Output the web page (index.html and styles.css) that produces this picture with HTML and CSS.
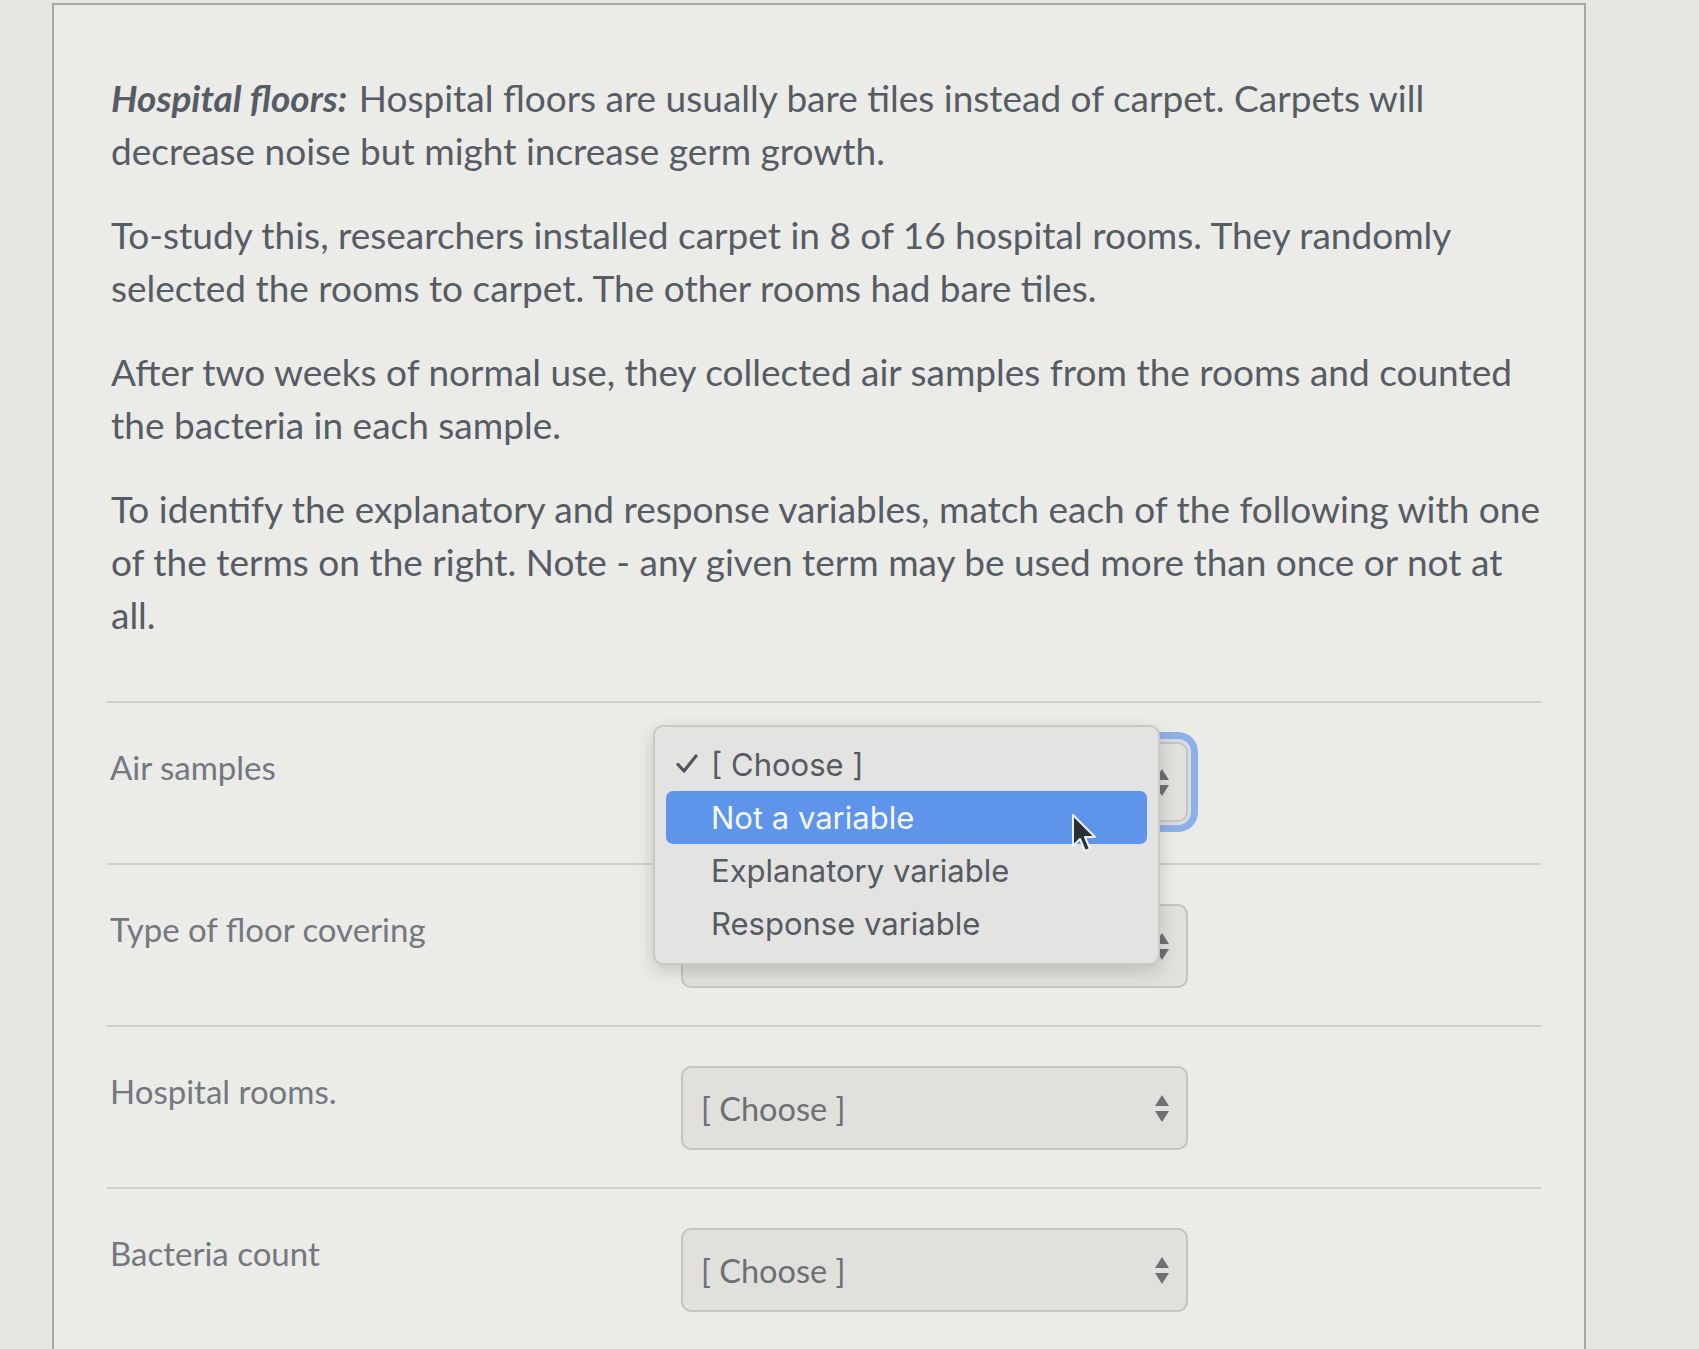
FILE: index.html
```html
<!DOCTYPE html>
<html lang="en">
<head>
<meta charset="utf-8">
<title>Hospital floors</title>
<link rel="stylesheet" href="styles.css">
</head>
<body>
<div class="page">
  <div class="panel">
    <div class="text">
      <p><strong><em>Hospital floors:</em></strong> Hospital floors are usually bare tiles instead of carpet. Carpets will decrease noise but might increase germ growth.</p>
      <p>To-study this, researchers installed carpet in 8 of 16 hospital rooms. They randomly selected the rooms to carpet. The other rooms had bare tiles.</p>
      <p>After two weeks of normal use, they collected air samples from the rooms and counted the bacteria in each sample.</p>
      <p>To identify the explanatory and response variables, match each of the following with one of the terms on the right. Note - any given term may be used more than once or not at all.</p>
    </div>
    <div class="matches">
      <div class="row">
        <div class="label">Air samples</div>
        <div class="select-wrap">
          <div class="select focused"><span class="value covered">[ Choose ]</span><span class="arrows"><i class="up"></i><i class="down"></i></span></div>
          <ul class="menu">
            <li class="item checked"><svg class="check" width="24" height="22" viewBox="0 0 24 22"><path d="M3 11.5 L9 18 L21 3" fill="none" stroke="#50545b" stroke-width="3.2" stroke-linecap="round" stroke-linejoin="round"/></svg>[ Choose ]</li>
            <li class="item active">Not a variable</li>
            <li class="item">Explanatory variable</li>
            <li class="item">Response variable</li>
          </ul>
          <svg class="cursor" width="26" height="42" viewBox="0 0 26 42"><path d="M2 2 L2 33 L9 26 L14 38 L19 36 L14 24 L24 24 Z" fill="#2b2f36" stroke="#eef2f8" stroke-width="2" stroke-linejoin="round"/></svg>
        </div>
      </div>
      <div class="row">
        <div class="label">Type of floor covering</div>
        <div class="select-wrap">
          <div class="select"><span class="value covered">[ Choose ]</span><span class="arrows"><i class="up"></i><i class="down"></i></span></div>
        </div>
      </div>
      <div class="row">
        <div class="label">Hospital rooms.</div>
        <div class="select-wrap">
          <div class="select"><span class="value">[ Choose ]</span><span class="arrows"><i class="up"></i><i class="down"></i></span></div>
        </div>
      </div>
      <div class="row">
        <div class="label">Bacteria count</div>
        <div class="select-wrap">
          <div class="select"><span class="value">[ Choose ]</span><span class="arrows"><i class="up"></i><i class="down"></i></span></div>
        </div>
      </div>
    </div>
  </div>
</div>
</body>
</html>
```
FILE: styles.css
```css
html, body {
  margin: 0;
  padding: 0;
  background: #e6e6e3;
  overflow: hidden;
}
body {
  width: 1699px;
  height: 1349px;
  font-family: "Lato", "Liberation Sans", sans-serif;
}
.page {
  padding: 3px 0 0 52px;
  height: 1346px;
  box-sizing: border-box;
}
.panel {
  width: 1534px;
  height: 1400px;
  box-sizing: border-box;
  border: 2px solid #a7a8a6;
  border-bottom: none;
  background: #ebebe8;
  padding: 66px 0 0 53px;
}
.text {
  width: 1436px;
  padding-left: 4px;
  color: #565c64;
  font-size: 37px;
  line-height: 53px;
}
.text p {
  margin: 0 0 31px 0;
}
.text strong {
  padding-right: 2px;
}
.text strong em {
  font-weight: 700;
  font-style: italic;
}
.matches {
  margin-top: 60px;
  width: 1434px;
}
.row {
  display: grid;
  grid-template-columns: 574px 507px;
  height: 162px;
  border-top: 2px solid #d0d1ce;
  box-sizing: border-box;
}
.label {
  padding: 44px 0 0 3px;
  font-size: 33px;
  line-height: 40px;
  color: #73787e;
}
.select-wrap {
  position: relative;
  padding-top: 39px;
}
.select {
  height: 84px;
  box-sizing: border-box;
  border: 2px solid #c4c5c2;
  border-radius: 10px;
  background: #e0e0dd;
  display: flex;
  align-items: center;
  justify-content: space-between;
  padding: 0 17px 0 18px;
  font-size: 32.5px;
  color: #6c7075;
}
.select .covered {
  visibility: hidden;
}
.select.focused {
  height: 80px;
  box-shadow: 0 0 0 3px #d9dbe0, 0 0 0 10px #8db0e7;
}
.arrows {
  display: flex;
  flex-direction: column;
  gap: 5px;
  align-items: center;
}
.arrows i {
  display: block;
  width: 0;
  height: 0;
  border-left: 7px solid transparent;
  border-right: 7px solid transparent;
}
.arrows .up {
  border-bottom: 11px solid #6d7175;
}
.arrows .down {
  border-top: 11px solid #6d7175;
}
.menu {
  position: absolute;
  left: -28px;
  top: 22px;
  width: 507px;
  margin: 0;
  padding: 11px 0 13px 0;
  box-sizing: border-box;
  list-style: none;
  background: #e3e3e1;
  border: 2px solid #c8c8c6;
  border-radius: 10px;
  box-shadow: 0 6px 18px rgba(0, 0, 0, 0.16);
  font-family: "Inter", "Open Sans", sans-serif;
  font-size: 31px;
  color: #565a61;
  z-index: 2;
}
.item {
  position: relative;
  height: 53px;
  line-height: 53px;
  margin: 0 11px;
  padding-left: 45px;
  border-radius: 7px;
}
.item.active {
  background: #5e95ea;
  color: #f5f8fd;
}
.check {
  position: absolute;
  left: 9px;
  top: 15px;
}
.cursor {
  position: absolute;
  left: 390px;
  top: 110px;
  z-index: 3;
}
```
